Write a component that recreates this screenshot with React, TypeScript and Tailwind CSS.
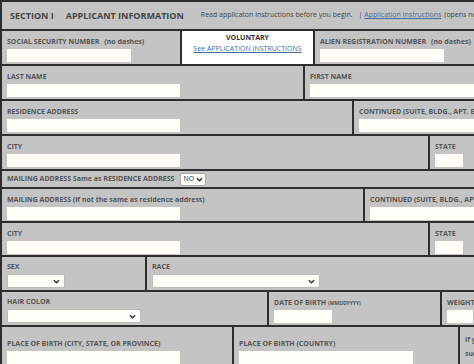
import React from 'react';

const Label: React.FC<{ text: string; note?: string; small?: boolean }> = ({ text, note, small }) => (
  <div className="text-[7px] leading-[10px] font-bold text-[#555] whitespace-nowrap">
    {text}
    {note && <span className={small ? 'ml-[2px] text-[5px]' : 'ml-[5px]'}>{note}</span>}
  </div>
);

const Field: React.FC<{ w: string }> = ({ w }) => <div className={`${w} h-[13px] mt-[2px] bg-[#fffef8]`} />;

const Chevron = () => (
  <svg width="7" height="5" viewBox="0 0 8 5" className="text-[#333]">
    <path d="M1 1l3 3 3-3" fill="none" stroke="currentColor" strokeWidth="1.6" />
  </svg>
);

const Select: React.FC<{ w: string; value?: string }> = ({ w, value }) => (
  <div className={`${w} h-[14px] mt-[2px] bg-[#fffef8] border border-[#bbb] rounded-[2px] flex items-center justify-between px-[4px]`}>
    <span className="text-[8px] text-[#333]">{value}</span>
    <Chevron />
  </div>
);

const Cell: React.FC<{ w?: string; first?: boolean; children: React.ReactNode; pt?: string }> = ({ w, first, children, pt }) => (
  <div className={`${w ?? 'flex-1'} ${first ? '' : 'border-l-2 border-[#2e2e2e]'} ${pt ?? 'pt-[6px]'} px-[5px]`}>{children}</div>
);

const Row: React.FC<{ h?: string; children: React.ReactNode }> = ({ h, children }) => (
  <div className={`flex ${h ?? 'h-[35px]'} border-b-2 border-[#2e2e2e]`}>{children}</div>
);

export default function App() {
  return (
    <div className="w-[474px] h-[364px] overflow-hidden bg-[#c4c4c4]" style={{ fontFamily: '"Open Sans", "Noto Sans", sans-serif' }}>
      <div className="w-[560px] border-t-2 border-l-2 border-[#2e2e2e] bg-[#c4c4c4]">
        <Row h="h-[29px]">
          <div className="flex items-center pl-[8px] gap-[12px] text-[#444]">
            <span className="text-[9px] font-bold">SECTION I</span>
            <span className="text-[9px] font-bold">APPLICANT INFORMATION</span>
            <span className="text-[7px] ml-[5px]">Read applicaton instructions before you begin.</span>
            <span className="text-[7px] -ml-[6px]">
              | <span className="text-[#3f6e9e] underline">Application Instructions</span>
              <span className="ml-[3px]">(opens new window)</span>
            </span>
          </div>
        </Row>
        <Row>
          <Cell w="w-[178px]" first>
            <Label text="SOCIAL SECURITY NUMBER" note="(no dashes)" />
            <Field w="w-[124px]" />
          </Cell>
          <div className="w-[133px] border-l-2 border-[#2e2e2e] bg-white flex flex-col items-center pt-[2px]">
            <div className="text-[7px] leading-[10px] font-bold text-[#333]">VOLUNTARY</div>
            <div className="text-[7px] leading-[10px] mt-[1px] text-[#3f6e9e] underline">See APPLICATION INSTRUCTIONS</div>
          </div>
          <Cell>
            <Label text="ALIEN REGISTRATION NUMBER" note="(no dashes)" />
            <Field w="w-[124px]" />
          </Cell>
        </Row>
        <Row>
          <Cell w="w-[301px]" first>
            <Label text="LAST NAME" />
            <Field w="w-[173px]" />
          </Cell>
          <Cell>
            <Label text="FIRST NAME" />
            <Field w="w-[200px]" />
          </Cell>
        </Row>
        <Row>
          <Cell w="w-[350px]" first>
            <Label text="RESIDENCE ADDRESS" />
            <Field w="w-[173px]" />
          </Cell>
          <Cell>
            <Label text="CONTINUED (SUITE, BLDG., APT. ETC.)" />
            <Field w="w-[173px]" />
          </Cell>
        </Row>
        <Row>
          <Cell w="w-[426px]" first>
            <Label text="CITY" />
            <Field w="w-[173px]" />
          </Cell>
          <Cell>
            <Label text="STATE" />
            <Field w="w-[28px]" />
          </Cell>
        </Row>
        <Row h="h-[18px]">
          <div className="flex items-center pl-[5px]">
            <Label text="MAILING ADDRESS Same as RESIDENCE ADDRESS" />
            <div className="ml-[6px] w-[26px] h-[13px] bg-[#fffef8] border border-[#aaa] rounded-[2px] flex items-center justify-between px-[2px]">
              <span className="text-[7px] text-[#333]">NO</span>
              <Chevron />
            </div>
          </div>
        </Row>
        <Row h="h-[34px]">
          <Cell w="w-[361px]" first>
            <Label text="MAILING ADDRESS (if not the same as residence address)" />
            <Field w="w-[173px]" />
          </Cell>
          <Cell>
            <Label text="CONTINUED (SUITE, BLDG., APT. ETC.)" />
            <Field w="w-[173px]" />
          </Cell>
        </Row>
        <Row h="h-[34px]">
          <Cell w="w-[426px]" first>
            <Label text="CITY" />
            <Field w="w-[173px]" />
          </Cell>
          <Cell>
            <Label text="STATE" />
            <Field w="w-[28px]" />
          </Cell>
        </Row>
        <Row h="h-[35px]">
          <Cell w="w-[143px]" first pt="pt-[5px]">
            <Label text="SEX" />
            <Select w="w-[58px]" />
          </Cell>
          <Cell pt="pt-[5px]">
            <Label text="RACE" />
            <Select w="w-[168px]" />
          </Cell>
        </Row>
        <Row h="h-[35px]">
          <Cell w="w-[265px]" first pt="pt-[5px]">
            <Label text="HAIR COLOR" />
            <Select w="w-[134px]" />
          </Cell>
          <Cell w="w-[173px]" pt="pt-[6px]">
            <Label text="DATE OF BIRTH" note="(MMDDYYYY)" small />
            <Field w="w-[58px]" />
          </Cell>
          <Cell pt="pt-[6px]">
            <Label text="WEIGHT" note="(lbs)" />
            <Field w="w-[26px]" />
          </Cell>
        </Row>
        <Row h="h-[45px]">
          <Cell w="w-[230px]" first pt="pt-[12px]">
            <Label text="PLACE OF BIRTH (CITY, STATE, OR PROVINCE)" />
            <Field w="w-[173px]" />
          </Cell>
          <Cell w="w-[226px]" pt="pt-[12px]">
            <Label text="PLACE OF BIRTH (COUNTRY)" />
            <Field w="w-[174px]" />
          </Cell>
          <Cell pt="pt-[6px]">
            <div className="text-[7px] leading-[14px] font-bold text-[#555]">If your place of birth</div>
            <div className="text-[7px] leading-[14px] font-bold text-[#555]">such as</div>
          </Cell>
        </Row>
      </div>
    </div>
  );
}
